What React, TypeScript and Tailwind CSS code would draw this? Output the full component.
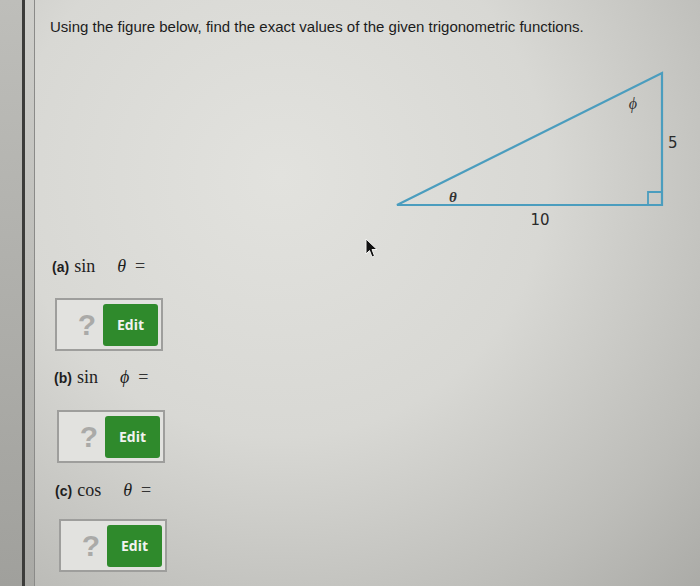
import React from "react";

function AnswerBox({ ml }: { ml: string }) {
  return (
    <div
      className={`${ml} w-[108px] h-[53px] border-2 border-[#9e9e9c] bg-[#e2e2df] flex items-center pl-[17px]`}
    >
      <span className="w-[26px] text-center text-[30px] leading-none font-bold text-[#aaaaa8] font-['Liberation_Sans',Arial,sans-serif]">
        ?
      </span>
      <div className="ml-[3px] w-[55px] h-[42px] rounded-[3px] bg-[#2f8a2c] flex items-center justify-center text-[#f2f2f0] text-[14px] font-bold font-['Open_Sans','Liberation_Sans',sans-serif]">
        Edit
      </div>
    </div>
  );
}

function Label({ tag, fn, sym, ml }: { tag: string; fn: string; sym: string; ml: string }) {
  return (
    <div className={`${ml} flex items-baseline h-[24px] text-[#1e1e1e]`}>
      <span className="text-[14px] font-bold font-['Liberation_Sans',Arial,sans-serif]">({tag})</span>
      <span className="ml-[5px] text-[18px] font-['Liberation_Serif','Times_New_Roman',serif]">{fn}</span>
      <span className="ml-[22px] text-[18px] italic font-['Liberation_Serif','Times_New_Roman',serif]">{sym}</span>
      <span className="ml-[9px] text-[18px] text-[#333] font-['Liberation_Serif','Times_New_Roman',serif]">=</span>
    </div>
  );
}

export default function App() {
  return (
    <div className="relative w-[700px] h-[586px] overflow-hidden flex bg-[radial-gradient(ellipse_at_40%_30%,#e2e2de_0%,#d8d8d4_45%,#bdbdb9_80%,#ababa7_100%)]">
      <div className="w-[22px] h-full bg-[linear-gradient(180deg,#bebeba,#a0a09c)]" />
      <div className="w-[3px] h-full bg-[#3c3c3a]" />
      <div className="w-[9px] h-full bg-[linear-gradient(180deg,#cfcfcb,#a9a9a5)]" />
      <div className="w-[1px] h-full bg-[#8a8a88]" />
      <div className="flex-1 flex flex-col">
        <div className="pl-[15px] pt-[17px] text-[15px] leading-[20px] text-[#1c1c1c] font-['Liberation_Sans',Arial,sans-serif]">
          Using the figure below, find the exact values of the given trigonometric functions.
        </div>
        <div className="flex justify-end pr-[10px] mt-[28px]">
          <svg width="300" height="165" viewBox="0 0 300 165">
            <polygon
              points="7,140 272,8 272,140"
              fill="none"
              stroke="#4b9dbe"
              strokeWidth="2.2"
              strokeLinejoin="miter"
            />
            <polyline points="258,140 258,127 272,127" fill="none" stroke="#4b9dbe" strokeWidth="1.8" />
            <text x="243" y="44" fontSize="16" fontStyle="italic" fontFamily="'Liberation Serif', serif" fill="#333" textAnchor="middle">
              ϕ
            </text>
            <text x="63" y="137" fontSize="15" fontStyle="italic" fontWeight="bold" fontFamily="'Liberation Serif', serif" fill="#333" textAnchor="middle">
              θ
            </text>
            <text x="278" y="83" fontSize="15" fontFamily="'DejaVu Sans', sans-serif" fill="#2a2a2a">
              5
            </text>
            <text x="150" y="160" fontSize="15" fontFamily="'DejaVu Sans', sans-serif" fill="#2a2a2a" textAnchor="middle">
              10
            </text>
          </svg>
        </div>
        <div className="mt-[23px]">
          <Label tag="a" fn="sin" sym="θ" ml="ml-[17px]" />
        </div>
        <div className="mt-[21px]">
          <AnswerBox ml="ml-[20px]" />
        </div>
        <div className="mt-[13px]">
          <Label tag="b" fn="sin" sym="ϕ" ml="ml-[19px]" />
        </div>
        <div className="mt-[22px]">
          <AnswerBox ml="ml-[22px]" />
        </div>
        <div className="mt-[14px]">
          <Label tag="c" fn="cos" sym="θ" ml="ml-[20px]" />
        </div>
        <div className="mt-[18px]">
          <AnswerBox ml="ml-[24px]" />
        </div>
      </div>
      <svg className="absolute left-[364px] top-[238px]" width="16" height="22" viewBox="0 0 16 22">
        <path d="M2 1 L2 16 L5.5 12.5 L8 19 L10.5 18 L8 11.5 L13 11.5 Z" fill="#111" stroke="#f4f4f2" strokeWidth="1" />
      </svg>
    </div>
  );
}
